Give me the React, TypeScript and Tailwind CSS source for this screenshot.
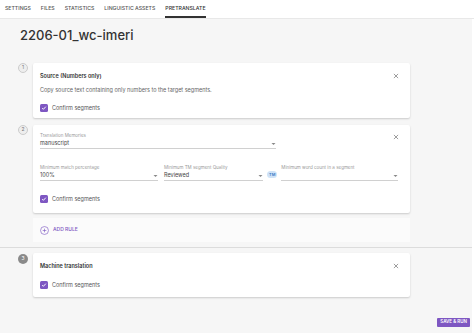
import React from "react";

const Check = () => (
  <span className="w-[8px] h-[8px] rounded-[1.5px] bg-[#7e57c2] flex items-center justify-center">
    <svg width="6" height="6" viewBox="0 0 10 10">
      <path d="M2 5.2l2 2 4-4.4" stroke="#fff" strokeWidth="1.6" fill="none" />
    </svg>
  </span>
);

const Close = () => (
  <svg width="6" height="6" viewBox="0 0 10 10" className="shrink-0">
    <path d="M1.5 1.5l7 7M8.5 1.5l-7 7" stroke="#777" strokeWidth="1.2" />
  </svg>
);

const Chevron = () => (
  <svg width="5" height="4" viewBox="0 0 10 8">
    <path d="M1 2l4 4 4-4z" fill="#888" />
  </svg>
);

const Confirm = () => (
  <div className="flex items-center gap-[4px]">
    <Check />
    <span className="text-[5.5px] text-[#555]">Confirm segments</span>
  </div>
);

const StepDot = ({ n, dark }: { n: number; dark?: boolean }) => (
  <div
    className={
      dark
        ? "w-[10px] h-[10px] rounded-full bg-[#8a8a8a] text-white text-[5px] flex items-center justify-center shrink-0"
        : "w-[10px] h-[10px] rounded-full bg-[#eee] border border-[#ccc] text-[#777] text-[5px] flex items-center justify-center shrink-0"
    }
  >
    {n}
  </div>
);

const Field = ({ label, value, w }: { label: string; value: string; w: string }) => (
  <div className={`${w} flex flex-col`}>
    <span className="text-[4.5px] text-[#999] leading-[6px]">{label}</span>
    <div className="flex items-center justify-between h-[10px] border-b border-[#d0d0d0]">
      <span className="text-[5.5px] text-[#444]">{value}</span>
      <Chevron />
    </div>
  </div>
);

const tabs = ["SETTINGS", "FILES", "STATISTICS", "LINGUISTIC ASSETS", "PRETRANSLATE"];

export default function App() {
  return (
    <div className="w-[474px] h-[333px] bg-white overflow-hidden" style={{ fontFamily: "Inter, 'Noto Sans', sans-serif" }}>
      <div className="h-[19px] flex items-stretch gap-[10px] pl-[5px] border-b border-[#e8e8e8]">
        {tabs.map((t) => (
          <div
            key={t}
            className={
              t === "PRETRANSLATE"
                ? "flex items-center text-[5.2px] font-medium text-[#333] border-b-2 border-[#333] pt-[2px]"
                : "flex items-center text-[5.2px] font-medium text-[#555] pt-[2px] border-b-2 border-transparent"
            }
          >
            {t}
          </div>
        ))}
      </div>
      <div className="w-[472px] h-[314px] bg-[#f6f6f6] flex flex-col">
        <h1 className="pl-[20px] pt-[6px] h-[38px] text-[13px] font-medium text-[#333] leading-[20px]">2206-01_wc-imeri</h1>

        <div className="flex gap-[5px] pl-[18px] mt-[6px]">
          <StepDot n={1} />
          <div className="w-[377px] h-[55px] bg-white shadow-[0_1px_2px_rgba(0,0,0,0.18)] rounded-[2px] px-[7px] pt-[9px]">
            <div className="flex justify-between items-center pr-[4px]">
              <span className="text-[5.5px] font-semibold text-[#333]">Source (Numbers only)</span>
              <Close />
            </div>
            <p className="text-[5.5px] text-[#666] mt-[6px]">Copy source text containing only numbers to the target segments.</p>
            <div className="mt-[9px]">
              <Confirm />
            </div>
          </div>
        </div>

        <div className="flex gap-[5px] pl-[18px] mt-[7px]">
          <StepDot n={2} />
          <div className="w-[377px] flex flex-col">
            <div className="h-[88px] bg-white shadow-[0_1px_2px_rgba(0,0,0,0.18)] rounded-[2px] px-[7px] pt-[8px]">
              <div className="flex justify-between items-start pr-[4px]">
                <Field label="Translation Memories" value="manuscript" w="w-[236px]" />
                <div className="pt-[1px]">
                  <Close />
                </div>
              </div>
              <div className="flex items-end mt-[16px]">
                <Field label="Minimum match percentage" value="100%" w="w-[118px]" />
                <div className="w-[6px]" />
                <Field label="Minimum TM segment Quality" value="Reviewed" w="w-[99px]" />
                <span className="mx-[4px] mb-[3px] h-[7px] px-[2px] rounded-full bg-[#cfe3f7] text-[#3b78c4] text-[4px] font-semibold flex items-center">TM</span>
                <Field label="Minimum word count in a segment" value="" w="w-[117px]" />
              </div>
              <div className="mt-[14px]">
                <Confirm />
              </div>
            </div>
            <div className="mt-[5px] h-[24px] bg-[#fbfbfb] flex items-center gap-[4px] pl-[7px]">
              <svg width="9" height="9" viewBox="0 0 10 10">
                <circle cx="5" cy="5" r="4.4" stroke="#7e57c2" strokeWidth="0.7" fill="none" />
                <path d="M5 3v4M3 5h4" stroke="#7e57c2" strokeWidth="0.7" />
              </svg>
              <span className="text-[5px] font-medium text-[#7e57c2]">ADD RULE</span>
            </div>
          </div>
        </div>

        <div className="mt-[5px] h-px bg-[#dcdcdc]" />

        <div className="flex gap-[5px] pl-[18px] mt-[5px]">
          <div className="pt-[1px]">
            <StepDot n={3} dark />
          </div>
          <div className="w-[377px] h-[44px] bg-white shadow-[0_1px_2px_rgba(0,0,0,0.18)] rounded-[2px] px-[7px] pt-[9px]">
            <div className="flex justify-between items-center pr-[4px]">
              <span className="text-[5.5px] font-semibold text-[#333]">Machine translation</span>
              <Close />
            </div>
            <div className="mt-[11px]">
              <Confirm />
            </div>
          </div>
        </div>

        <div className="flex justify-end pr-[2px] mt-[21px]">
          <button className="h-[9px] px-[3px] bg-[#7e57c2] text-white text-[4.5px] font-semibold rounded-[1px]">SAVE &amp; RUN</button>
        </div>
      </div>
    </div>
  );
}
